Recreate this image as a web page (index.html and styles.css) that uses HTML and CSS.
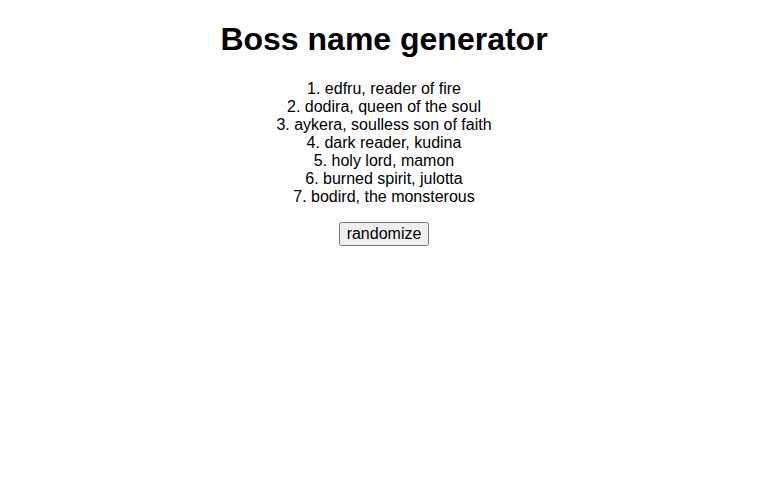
FILE: index.html
```html
<!DOCTYPE html>
<html lang="en">
<head>
    <meta charset="UTF-8">
    <meta name="viewport" content="width=device-width, initial-scale=1.0">
    <title>Boss name generator</title>
    <link rel="stylesheet" href="styles.css">
</head>
<body>
    <h1>Boss name generator</h1>

    <div class="names" id="names">
        <div>1. edfru, reader of fire</div>
        <div>2. dodira, queen of the soul</div>
        <div>3. aykera, soulless son of faith</div>
        <div>4. dark reader, kudina</div>
        <div>5. holy lord, mamon</div>
        <div>6. burned spirit, julotta</div>
        <div>7. bodird, the monsterous</div>
    </div>

    <button class="randomize">randomize</button>
</body>
</html>
```

FILE: styles.css
```css
body {
    font-family: "Liberation Sans", Arial, sans-serif;
    text-align: center;
    color: #000;
    background: #fff;
}
h1 {
    font-size: 32px;
    margin: 13px 0 22px;
}
.names {
    font-size: 16px;
}
.randomize {
    font-family: "Liberation Sans", Arial, sans-serif;
    font-size: 16px;
    margin-top: 16px;
}
```
